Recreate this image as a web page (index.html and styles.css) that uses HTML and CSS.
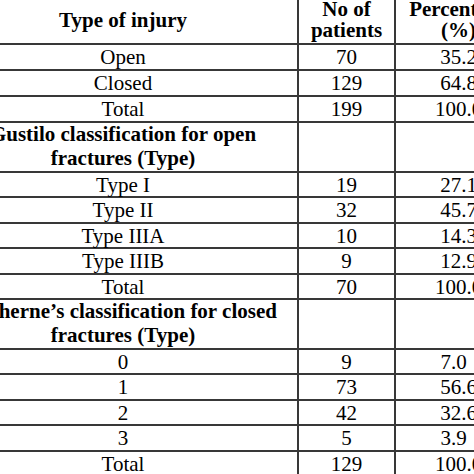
FILE: index.html
```html
<!DOCTYPE html>
<html>
<head>
<meta charset="utf-8">
<link rel="stylesheet" href="styles.css">
</head>
<body>
<div class="page">
<table class="tbl">
<colgroup><col class="c1"><col class="c2"><col class="c3"></colgroup>
<tr class="head">
<th>Type of injury</th>
<th>No of<br>patients</th>
<th>Percentage<br>(%)</th>
</tr>
<tr class="r1"><td>Open</td><td>70</td><td>35.2</td></tr>
<tr class="r1"><td>Closed</td><td>129</td><td>64.8</td></tr>
<tr class="r1"><td>Total</td><td>199</td><td>100.0</td></tr>
<tr class="group"><th>Gustilo classification for open<br>fractures (Type)</th><td></td><td></td></tr>
<tr><td>Type I</td><td>19</td><td>27.1</td></tr>
<tr><td>Type II</td><td>32</td><td>45.7</td></tr>
<tr><td>Type IIIA</td><td>10</td><td>14.3</td></tr>
<tr><td>Type IIIB</td><td>9</td><td>12.9</td></tr>
<tr><td>Total</td><td>70</td><td>100.0</td></tr>
<tr class="group"><th>Tscherne’s classification for closed<br>fractures (Type)</th><td></td><td></td></tr>
<tr><td>0</td><td>9</td><td class="short">7.0</td></tr>
<tr><td>1</td><td>73</td><td>56.6</td></tr>
<tr><td>2</td><td>42</td><td>32.6</td></tr>
<tr><td>3</td><td>5</td><td class="short">3.9</td></tr>
<tr><td>Total</td><td>129</td><td>100.0</td></tr>
</table>
</div>
</body>
</html>
```
FILE: styles.css
```css
html, body {
  margin: 0;
  padding: 0;
  background: #fff;
}
.page {
  width: 474px;
  height: 474px;
  overflow: hidden;
}
.tbl {
  border-collapse: collapse;
  table-layout: fixed;
  width: 574px;
  margin-left: -53px;
  margin-top: -3px;
  font-family: "Liberation Serif", "Times New Roman", serif;
  font-size: 21px;
  color: #000;
}
.c1 { width: 350px; }
.c2 { width: 97px; }
.c3 { width: 127px; }
.tbl td, .tbl th {
  border: 2px solid #383838;
  padding: 0;
  text-align: center;
  vertical-align: middle;
  line-height: 23.5px;
  white-space: nowrap;
}
.tbl td {
  padding-top: 1px;
  line-height: 22.5px;
}
.tbl th {
  font-weight: bold;
}
.head th {
  line-height: 21px;
  padding-bottom: 2px;
}
.r1 td {
  line-height: 23px;
}
.group th {
  line-height: 23.75px;
}
.short {
  padding-right: 10px !important;
}
```
